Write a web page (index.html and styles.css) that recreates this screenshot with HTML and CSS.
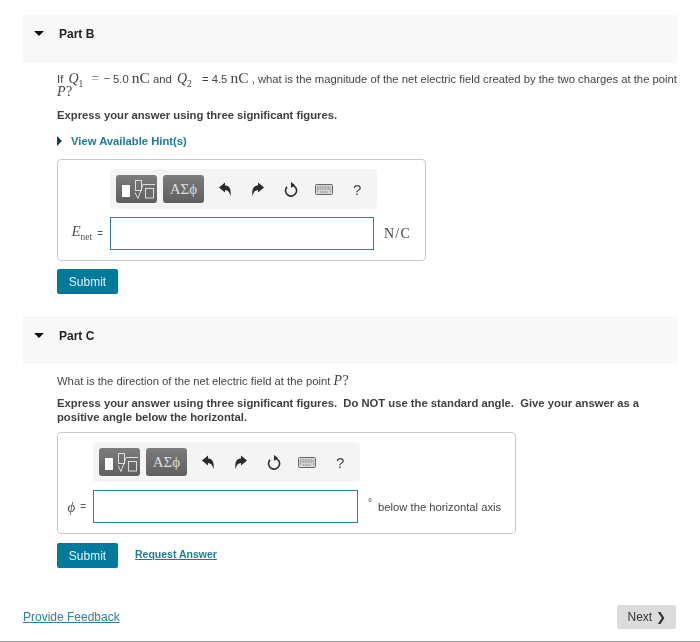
FILE: index.html
```html
<!DOCTYPE html>
<html lang="en">
<head>
  <meta charset="UTF-8">
  <meta name="viewport" content="width=device-width, initial-scale=1.0">
  <title>Part B and Part C</title>
  <link rel="stylesheet" href="styles.css">
</head>

<body>
  <svg class="icon-defs" width="0" height="0">
    <symbol id="undo" viewBox="0 0 12 14">
      <path d="M0 5.5 L6 0.5 V3.5 C10 3.5 12.5 6.5 11.5 14 C10.5 10 9 8 6 8 V10.5 Z"/>
    </symbol>
    <symbol id="reset" viewBox="0 0 14 15">
      <path d="M8 3.2 A5.5 5.5 0 1 1 3 4.9" fill="none" stroke="#2b2b2b" stroke-width="1.6"/>
      <path d="M7 0 L11 3 L7 6 Z"/>
    </symbol>
    <symbol id="keyboard" viewBox="0 0 18 11">
      <rect x="0.5" y="0.5" width="17" height="10" rx="1" fill="#d6d6d6" stroke="#666"/>
      <path d="M2 3 H16 M2 5 H16 M2 7 H3 M5 8 H13 M15 7 H16" stroke="#777" stroke-width="1" stroke-dasharray="1 .6"/>
    </symbol>
    <symbol id="templates" viewBox="0 0 41 28">
      <rect x="6" y="10" width="8" height="12" fill="#fff"/>
      <rect x="19.5" y="5.5" width="6" height="10" fill="none" stroke="#ddd"/>
      <path d="M19 17.5 L22 23.5 L27 9.5 H39" fill="none" stroke="#ddd"/>
      <rect x="29.5" y="13.5" width="8" height="9.5" fill="none" stroke="#ddd"/>
    </symbol>
  </svg>

  <main class="page">
    <section class="part">
      <header class="part-head">
        <span class="caret-down"></span>
        <h2>Part B</h2>
      </header>
      <div class="part-body">
        <p class="question">If <span class="math q"><i>Q</i><sub>1</sub></span><span class="math eq">=</span><span class="math minus">&minus;</span>5.0 <span class="math nc">nC</span> and <span class="math q q2"><i>Q</i><sub>2</sub></span> = 4.5 <span class="math nc">nC</span> , what is the magnitude of the net electric field created by the two charges at the point <span class="math p"><i>P</i>?</span></p>
        <p class="instruction">Express your answer using three significant figures.</p>
        <a class="hint"><span class="caret-right"></span>View Available Hint(s)</a>

        <div class="answer-box answer-b">
          <div class="toolbar">
            <button class="tool-btn"><svg width="41" height="28"><use href="#templates"/></svg></button>
            <button class="tool-btn tool-symbols">&Alpha;&Sigma;&#981;</button>
            <svg class="tool-icon" width="12" height="14"><use href="#undo"/></svg>
            <svg class="tool-icon flip" width="12" height="14"><use href="#undo"/></svg>
            <svg class="tool-icon tool-reset" width="14" height="15"><use href="#reset"/></svg>
            <svg class="tool-icon" width="18" height="11"><use href="#keyboard"/></svg>
            <span class="tool-help">?</span>
          </div>
          <div class="answer-row">
            <label class="answer-label"><span class="math"><i>E</i><sub>net</sub></span> =</label>
            <div class="answer-input"></div>
            <span class="unit math">N/C</span>
          </div>
        </div>

        <div class="actions">
          <button class="submit">Submit</button>
        </div>
      </div>
    </section>

    <section class="part part-c">
      <header class="part-head">
        <span class="caret-down"></span>
        <h2>Part C</h2>
      </header>
      <div class="part-body">
        <p class="question">What is the direction of the net electric field at the point <span class="math p"><i>P</i>?</span></p>
        <p class="instruction">Express your answer using three significant figures.&nbsp; Do NOT use the standard angle.&nbsp; Give your answer as a positive angle below the horizontal.</p>

        <div class="answer-box answer-c">
          <div class="toolbar">
            <button class="tool-btn"><svg width="41" height="28"><use href="#templates"/></svg></button>
            <button class="tool-btn tool-symbols">&Alpha;&Sigma;&#981;</button>
            <svg class="tool-icon" width="12" height="14"><use href="#undo"/></svg>
            <svg class="tool-icon flip" width="12" height="14"><use href="#undo"/></svg>
            <svg class="tool-icon tool-reset" width="14" height="15"><use href="#reset"/></svg>
            <svg class="tool-icon" width="18" height="11"><use href="#keyboard"/></svg>
            <span class="tool-help">?</span>
          </div>
          <div class="answer-row">
            <label class="answer-label"><span class="math"><i>&#981;</i></span> =</label>
            <div class="answer-input"></div>
            <span class="unit"><sup class="degree">&deg;</sup>below the horizontal axis</span>
          </div>
        </div>

        <div class="actions">
          <button class="submit">Submit</button>
          <a class="request">Request Answer</a>
        </div>
      </div>
    </section>

    <footer class="page-foot">
      <a class="feedback">Provide Feedback</a>
      <button class="next">Next <span class="chevron">&#10095;</span></button>
    </footer>
  </main>
</body>
</html>
```

FILE: styles.css
```css
* {
  margin: 0;
  padding: 0;
  box-sizing: border-box;
}

body {
  height: 642px;
  background-color: #fff;
  color: #333;
  font-family: 'Liberation Sans', Arial, sans-serif;
  font-size: 11.25px;
  overflow: hidden;
}

.icon-defs {
  display: block;
  height: 0;
}

.page {
  height: 642px;
  padding: 15px 23px 0;
  border-bottom: 1px solid #999;
  filter: blur(0.5px); /* reference is a soft photo */
}

.part-c {
  margin-top: 22px;
}

.part-head {
  display: flex;
  align-items: center;
  height: 48px;
  padding: 0 0 11px 11px;
  background-color: #f8f8f8;
}

.part-c .part-head {
  padding-bottom: 9px;
}

.part-head h2 {
  font-size: 12px;
  font-weight: bold;
  color: #222;
  margin-left: 15px;
}

.caret-down {
  width: 0;
  height: 0;
  border-left: 5.5px solid transparent;
  border-right: 5.5px solid transparent;
  border-top: 5px solid #111;
}

.caret-right {
  display: inline-block;
  width: 0;
  height: 0;
  margin-right: 9px;
  border-top: 5px solid transparent;
  border-bottom: 5px solid transparent;
  border-left: 5px solid #1a3f55;
}

.part-body {
  padding: 10px 0 0 34px;
}

.part-c .part-body {
  padding-top: 11px;
}

.question {
  line-height: 13px;
  color: #444;
}

.math {
  font-family: 'Liberation Serif', 'DejaVu Serif', serif;
  font-size: 14px;
  line-height: 0;
}

.math sub {
  font-size: 9.5px;
  line-height: 0;
}

.q {
  margin: 0 2px;
}

.q2 {
  margin-right: 7px;
}

.eq {
  margin: 0 4px 0 6px;
  color: #777;
}

.minus {
  margin-right: 2px;
}

.nc {
  font-size: 15.5px;
}

.p {
  letter-spacing: 0.5px;
}

.instruction {
  margin-top: 9px;
  font-weight: bold;
  line-height: 14px;
  color: #3f3f3f;
}

.part-c .instruction {
  margin-top: 8px;
}

.hint {
  display: flex;
  align-items: center;
  margin-top: 12px;
  font-weight: bold;
  line-height: 14px;
  color: #1f7a97;
}

.answer-box {
  margin-top: 11px;
  height: 102px;
  padding-top: 9px;
  border: 1px solid #c8c8c8;
  border-radius: 4px;
}

.answer-b {
  width: 369px;
}

.answer-c {
  width: 459px;
  margin-top: 8px;
}

.toolbar {
  display: flex;
  align-items: center;
  width: 267px;
  height: 40px;
  padding-left: 6px;
  background-color: #f4f4f4;
  border-radius: 4px;
}

.answer-b .toolbar {
  margin-left: 52px;
}

.answer-c .toolbar {
  margin-left: 35px;
}

.tool-btn {
  display: flex;
  align-items: center;
  justify-content: center;
  width: 41px;
  height: 28px;
  border: none;
  border-radius: 3px;
  color: #ddd;
  background: linear-gradient(#7c7c7c, #5f5f5f);
}

.tool-symbols {
  margin: 0 15px 0 6px;
  font-family: 'Liberation Serif', serif;
  font-size: 15px;
}

.tool-icon {
  fill: #2b2b2b;
  margin-right: 20px;
}

.tool-icon.flip {
  margin-left: 1px;
  transform: scaleX(-1);
}

.tool-reset {
  margin-right: 17px;
}

.tool-help {
  font-size: 15px;
  color: #444;
}

.answer-row {
  display: flex;
  align-items: center;
  margin-top: 8px;
}

.answer-input {
  height: 33px;
  background-color: #fff;
  border: 1px solid #2f7f9c;
}

.answer-b .answer-input {
  width: 264px;
}

.answer-c .answer-input {
  width: 265px;
}

.answer-label {
  display: flex;
  align-items: center;
  justify-content: flex-end;
  gap: 5px;
  padding-right: 7px;
  color: #555;
  font-size: 10px;
}

.answer-label .math {
  font-size: 15px;
}

.answer-b .answer-label {
  width: 52px;
}

.answer-c .answer-label {
  width: 35px;
}

.unit {
  margin-left: 10px;
  color: #444;
}

.unit.math {
  letter-spacing: 1.2px;
}

.degree {
  margin-right: 6px;
  font-size: 10px;
  line-height: 0;
}

.actions {
  display: flex;
  align-items: center;
  margin-top: 8px;
}

.part-c .actions {
  margin-top: 9px;
}

.submit {
  width: 61px;
  height: 25px;
  border: none;
  border-radius: 2px;
  background-color: #007a9c;
  color: #e8f4f8;
  font-family: inherit;
  font-size: 12px;
}

.request {
  margin: 0 0 3px 17px;
  font-size: 10.5px;
  font-weight: bold;
  color: #1f7a97;
  text-decoration: underline;
}

.page-foot {
  display: flex;
  align-items: center;
  justify-content: space-between;
  margin-top: 37px;
}

.feedback {
  font-size: 12px;
  color: #2b7fa3;
  text-decoration: underline;
}

.next {
  width: 59px;
  height: 24px;
  margin-right: 1px;
  border: none;
  border-radius: 2px;
  background-color: #dcdcdc;
  color: #333;
  font-family: inherit;
  font-size: 12px;
}

.chevron {
  font-size: 12px;
}
```
